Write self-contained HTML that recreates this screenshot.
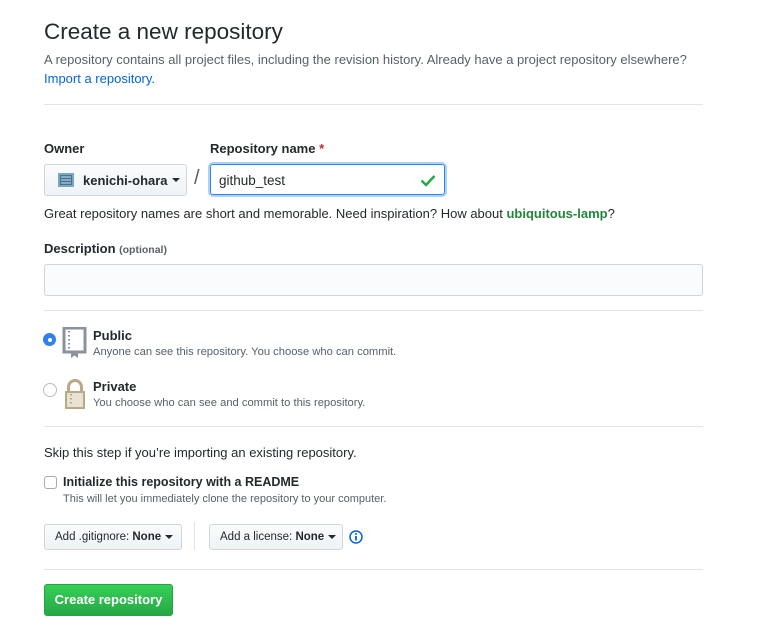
<!DOCTYPE html>
<html><head><style>
body{margin:0;background:#fff;font-family:"Liberation Sans",sans-serif;color:#24292e;width:768px;height:642px;position:relative;overflow:hidden}
.a{position:absolute;white-space:nowrap}
.line{position:absolute;left:44px;width:659px;height:1px;background:#e1e4e8}
.btn{position:absolute;border:1px solid #d1d5da;border-radius:3px;background:linear-gradient(#fafbfc,#eff3f6);box-sizing:border-box;font-size:11.5px;color:#24292e;display:flex;align-items:center}
.caret{display:inline-block;width:0;height:0;border-left:4px solid transparent;border-right:4px solid transparent;border-top:4px solid #24292e;margin-left:4px;vertical-align:middle}
b{font-weight:bold}
</style></head><body>
<div class="a" style="left:44px;top:19px;font-size:22.5px;color:#24292e">Create a new repository</div>
<div class="a" style="left:44px;top:52px;font-size:13px;color:#586069">A repository contains all project files, including the revision history. Already have a project repository elsewhere?</div>
<div class="a" style="left:44px;top:71px;font-size:13px;color:#0366d6">Import a repository.</div>
<div class="line" style="top:104px"></div>

<div class="a" style="left:44px;top:141px;font-size:13px;font-weight:bold">Owner</div>
<div class="a" style="left:210px;top:141px;font-size:13px;font-weight:bold">Repository name <span style="color:#cb2431">*</span></div>
<div class="btn" style="left:44px;top:164px;width:143px;height:32px;font-size:13px;font-weight:bold">
<svg style="margin-left:12px;margin-right:8px" width="18" height="16"><rect x="1" y="1" width="16" height="14" fill="#7aa7c0"/><rect x="3" y="3" width="12" height="10" fill="#2f5f7f" opacity=".7"/><path d="M4 5h10M4 8h10M4 11h10" stroke="#cde" stroke-width="1"/></svg>kenichi-ohara<span class="caret"></span></div>
<div class="a" style="left:194px;top:167px;font-size:20px;color:#586069">/</div>
<div class="a" style="left:210px;top:164px;width:235px;height:31px;box-sizing:border-box;border:1px solid #2188ff;border-radius:3px;box-shadow:0 0 0 2px rgba(3,102,214,.3);font-size:13.5px;padding:8px 0 0 8px">github_test
<svg style="position:absolute;right:8px;top:8px" width="16" height="14"><path d="M1.5 7.5l4.5 4.5 8.5-9" stroke="#28a745" stroke-width="2.4" fill="none"/></svg></div>
<div class="a" style="left:44px;top:206px;font-size:13px">Great repository names are short and memorable. Need inspiration? How about <b style="color:#22863a">ubiquitous-lamp</b>?</div>

<div class="a" style="left:44px;top:241px;font-size:13px;font-weight:bold">Description <span style="font-size:10.5px;color:#586069">(optional)</span></div>
<div class="a" style="left:44px;top:264px;width:659px;height:32px;box-sizing:border-box;border:1px solid #d1d5da;border-radius:3px;background:#fafbfc"></div>
<div class="line" style="top:310px"></div>

<div class="a" style="left:43px;top:333px;width:13px;height:13px;border-radius:50%;background:#2f80ed"><div style="position:absolute;left:4.5px;top:4.5px;width:4px;height:4px;border-radius:50%;background:#fff"></div></div>
<svg class="a" style="left:62px;top:327px" width="26" height="32"><path d="M2 1h21v24H2z" fill="none" stroke="#8a929b" stroke-width="3"/><path d="M7 4v18" stroke="#8a929b" stroke-width="2" stroke-dasharray="1.5 2.5"/><path d="M9 25h7v6l-3.5-2.5L9 31z" fill="#8a929b"/></svg>
<div class="a" style="left:93px;top:328px;font-size:13px;font-weight:bold">Public</div>
<div class="a" style="left:93px;top:346px;font-size:11.2px;color:#586069">Anyone can see this repository. You choose who can commit.</div>

<div class="a" style="left:43px;top:383px;width:12px;height:12px;border-radius:50%;border:1px solid #bbb;background:#fff"></div>
<svg class="a" style="left:63px;top:378px" width="24" height="32"><path d="M5.5 13V9a6.5 6.5 0 0 1 13 0v4" fill="none" stroke="#b8a989" stroke-width="3"/><rect x="2" y="13" width="20" height="18" fill="#b8a989"/><rect x="4" y="15" width="16" height="14" fill="#e9e2d2"/><path d="M8 16v12" stroke="#b8a989" stroke-width="2" stroke-dasharray="1.5 2.5"/></svg>
<div class="a" style="left:93px;top:379px;font-size:13px;font-weight:bold">Private</div>
<div class="a" style="left:93px;top:397px;font-size:11.2px;color:#586069">You choose who can see and commit to this repository.</div>
<div class="line" style="top:426px"></div>

<div class="a" style="left:44px;top:445px;font-size:13px">Skip this step if you’re importing an existing repository.</div>
<div class="a" style="left:44px;top:476px;width:11px;height:11px;border:1px solid #aaa;border-radius:3px"></div>
<div class="a" style="left:63px;top:475px;font-size:12.5px;font-weight:bold">Initialize this repository with a README</div>
<div class="a" style="left:63px;top:493px;font-size:11px;color:#586069">This will let you immediately clone the repository to your computer.</div>

<div class="btn" style="left:44px;top:524px;width:138px;height:26px;padding-left:10px">Add .gitignore:&nbsp;<b>None</b><span class="caret"></span></div>
<div class="a" style="left:194px;top:522px;width:1px;height:28px;background:#e1e4e8"></div>
<div class="btn" style="left:209px;top:524px;width:134px;height:26px;padding-left:10px">Add a license:&nbsp;<b>None</b><span class="caret"></span></div>
<svg class="a" style="left:349px;top:530px" width="14" height="14"><circle cx="7" cy="7" r="6" fill="none" stroke="#0366d6" stroke-width="1.5"/><path d="M7 6v4.5" stroke="#0366d6" stroke-width="1.8"/><circle cx="7" cy="4" r="1" fill="#0366d6"/></svg>
<div class="line" style="top:569px"></div>

<div class="a" style="left:44px;top:584px;width:129px;height:32px;border-radius:3px;background:linear-gradient(#34d058,#28a745);border:1px solid #25a541;box-sizing:border-box;color:#fff;font-size:13px;font-weight:bold;text-align:center;line-height:30px">Create repository</div>
</body></html>
